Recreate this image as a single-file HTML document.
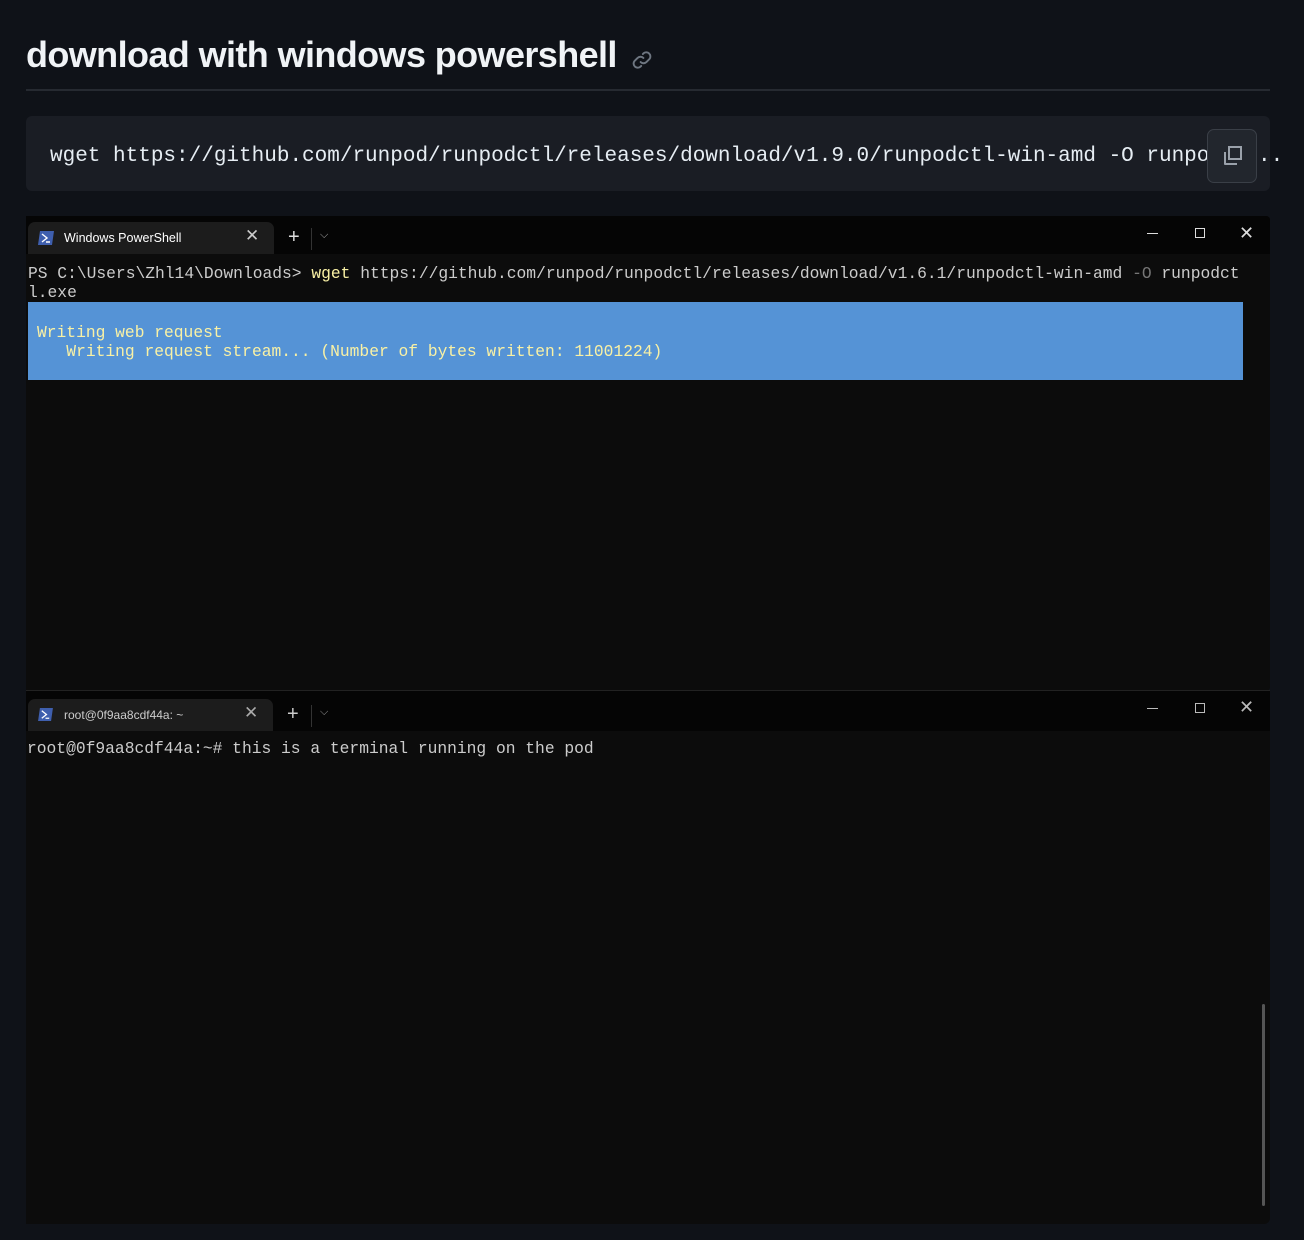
<!DOCTYPE html>
<html><head><meta charset="utf-8"><style>
*{margin:0;padding:0;box-sizing:border-box}
body{width:1304px;height:1240px;background:#0f1218;overflow:hidden;position:relative;font-family:"Liberation Sans",sans-serif}
.abs{position:absolute}
h1{position:absolute;left:26px;top:34px;font-size:36px;font-weight:bold;color:#f0f3f6;letter-spacing:-0.6px;white-space:nowrap}
.hr{left:26px;top:89px;width:1244px;height:2px;background:#262a31}
.code{left:26px;top:116px;width:1244px;height:75px;background:#1a1d24;border-radius:6px;overflow:hidden}
.code span{position:absolute;left:24px;top:29px;font-family:"Liberation Mono",monospace;font-size:21px;color:#e6edf3;white-space:nowrap}
.copy{left:1207px;top:129px;width:50px;height:54px;border:1px solid #3a3f47;border-radius:7px;background:#22262d}
.term{left:26px;background:#0c0c0c;width:1244px;overflow:hidden}
.bar{position:absolute;left:0;top:0;width:100%;background:#050505}
.tab{position:absolute;left:2px;background:#1c1c1c;border-radius:7px 7px 0 0;width:246px}
.mono{font-family:"Liberation Mono",monospace;font-size:16.3px;color:#cccccc;white-space:pre;position:absolute}
.tt{position:absolute;font-size:12.5px;color:#fff;top:9px;left:36px}
</style></head><body>
<h1>download with windows powershell</h1>
<svg class="abs" style="left:631px;top:49px" width="22" height="22" viewBox="0 0 16 16" fill="none" stroke="#6e7681" stroke-width="1.4" stroke-linecap="round"><path d="M7 9.5a3 3 0 0 0 4.2 0l2.3-2.3a3 3 0 0 0-4.2-4.2L8.6 3.7"/><path d="M9 6.5a3 3 0 0 0-4.2 0L2.5 8.8a3 3 0 0 0 4.2 4.2l.7-.7"/></svg>
<div class="abs hr"></div>
<div class="abs code"><span>wget https://github.com/runpod/runpodctl/releases/download/v1.9.0/runpodctl-win-amd -O runpodctl.exe</span></div>
<div class="abs" style="left:1257px;top:140px;width:13px;height:30px;background:#1a1d24"></div>
<div class="abs copy"><svg style="position:absolute;left:12px;top:13px" width="26" height="26" viewBox="0 0 26 26" fill="none" stroke="#9aa1aa" stroke-width="2"><path d="M9 4h12v12H9z"/><path d="M5 9v12h12" stroke-linejoin="round"/></svg></div>
<span class="abs" style="left:1258px;top:145px;color:#e6edf3;font-family:'Liberation Mono',monospace;font-size:21px">..</span>

<div class="abs term" style="top:216px;height:475px;border-radius:0 4px 4px 0">
 <div class="bar" style="height:38px"></div>
 <div class="tab" style="top:6px;height:32px">
  <svg style="position:absolute;left:10px;top:9px" width="16" height="14" viewBox="0 0 16 14"><path d="M2 0h14l-2 14H0z" fill="#3f5fae"/><path d="M4 3l5 4-5 4" stroke="#fff" stroke-width="1.4" fill="none"/><path d="M8 11h4" stroke="#fff" stroke-width="1.4"/></svg>
  <span class="tt">Windows PowerShell</span>
  <span style="position:absolute;left:217px;top:4px;color:#ccc;font-size:17px">✕</span>
 </div>
 <span class="abs" style="left:262px;top:11px;color:#ddd;font-size:20px;line-height:20px">+</span>
 <div class="abs" style="left:285px;top:12px;width:1px;height:22px;background:#333"></div>
 <span class="abs" style="left:294px;top:13px;color:#aaa;font-size:11px">⌵</span>
 <div class="abs" style="left:1121px;top:17px;width:11px;height:1.3px;background:#ddd"></div>
 <div class="abs" style="left:1169px;top:12px;width:10px;height:10px;border:1.3px solid #ddd"></div>
 <span class="abs" style="left:1213px;top:7px;color:#ddd;font-size:18px">✕</span>
 <div class="mono" style="left:2px;top:48px">PS C:\Users\Zhl14\Downloads&gt; <span style="color:#f9f1a5">wget</span> https://github.com/runpod/runpodctl/releases/download/v1.6.1/runpodctl-win-amd <span style="color:#767676">-O</span> runpodct
l.exe</div>
 <div class="abs" style="left:2px;top:86px;width:1215px;height:78px;background:#5593d6"></div>
 <div class="mono" style="left:11px;top:107px;color:#f9f1a5">Writing web request
   Writing request stream... (Number of bytes written: 11001224)</div>
</div>

<div class="abs term" style="top:690px;height:534px;border-radius:0 0 6px 0;border-top:1px solid #222">
 <div class="bar" style="height:40px"></div>
 <div class="tab" style="top:8px;height:32px;width:245px">
  <svg style="position:absolute;left:10px;top:9px" width="15" height="13" viewBox="0 0 16 14"><path d="M2 0h14l-2 14H0z" fill="#3f5fae"/><path d="M4 3l5 4-5 4" stroke="#fff" stroke-width="1.4" fill="none"/><path d="M8 11h4" stroke="#fff" stroke-width="1.4"/></svg>
  <span class="tt" style="color:#ccc;font-size:12px">root@0f9aa8cdf44a: ~</span>
  <span style="position:absolute;left:216px;top:4px;color:#aaa;font-size:17px">✕</span>
 </div>
 <span class="abs" style="left:261px;top:13px;color:#ccc;font-size:20px;line-height:20px">+</span>
 <div class="abs" style="left:285px;top:14px;width:1px;height:22px;background:#333"></div>
 <span class="abs" style="left:294px;top:15px;color:#999;font-size:11px">⌵</span>
 <div class="abs" style="left:1121px;top:17px;width:11px;height:1.3px;background:#bbb"></div>
 <div class="abs" style="left:1169px;top:12px;width:10px;height:10px;border:1.3px solid #bbb"></div>
 <span class="abs" style="left:1213px;top:6px;color:#bbb;font-size:18px">✕</span>
 <div class="mono" style="left:1px;top:48px">root@0f9aa8cdf44a:~# this is a terminal running on the pod</div>
 <div class="abs" style="left:1236px;top:313px;width:3px;height:202px;background:#555;border-radius:2px"></div>
</div>
</body></html>
